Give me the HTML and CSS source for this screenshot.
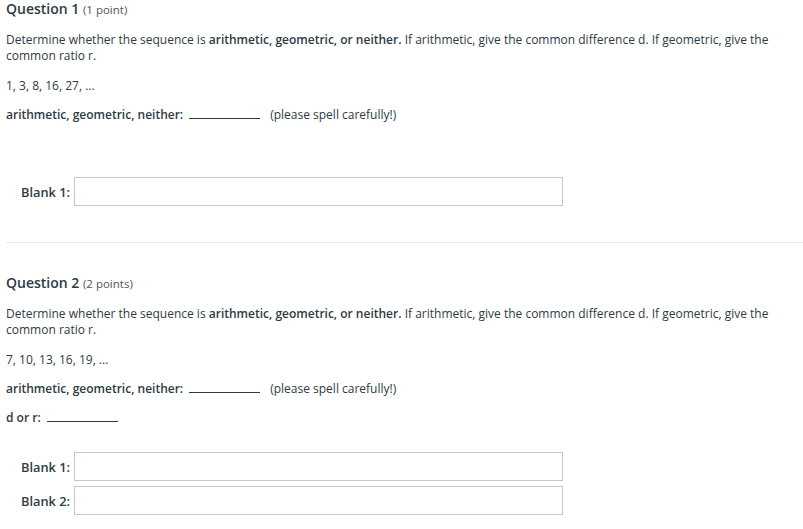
FILE: index.html
```html
<!DOCTYPE html>
<html>
<head>
<meta charset="utf-8">
<link rel="stylesheet" href="styles.css">
</head>
<body>
<div class="question q1">
  <h2 class="title">Question 1 <span class="points">(1 point)</span></h2>
  <p class="text">Determine whether the sequence is <b>arithmetic, geometric, or neither.</b> If arithmetic, give the common difference d. If geometric, give the common ratio r.</p>
  <p class="seq">1, 3, 8, 16, 27, ...</p>
  <p class="ask"><b>arithmetic, geometric, neither:</b><span class="blank"></span><span class="note">(please spell carefully!)</span></p>
  <div class="answers first">
    <div class="row"><label class="lbl">Blank 1:</label><div class="box"></div></div>
  </div>
</div>
<div class="sep"></div>
<div class="question q2">
  <h2 class="title">Question 2 <span class="points">(2 points)</span></h2>
  <p class="text">Determine whether the sequence is <b>arithmetic, geometric, or neither.</b> If arithmetic, give the common difference d. If geometric, give the common ratio r.</p>
  <p class="seq">7, 10, 13, 16, 19, ...</p>
  <p class="ask"><b>arithmetic, geometric, neither:</b><span class="blank"></span><span class="note">(please spell carefully!)</span></p>
  <p class="ask dr"><b>d or r:</b><span class="blank"></span></p>
  <div class="answers second">
    <div class="row"><label class="lbl">Blank 1:</label><div class="box"></div></div>
    <div class="row"><label class="lbl">Blank 2:</label><div class="box"></div></div>
  </div>
</div>
</body>
</html>
```
FILE: styles.css
```css
html, body {
  margin: 0;
  padding: 0;
  background: #ffffff;
}
body {
  font-family: "Open Sans", "Liberation Sans", sans-serif;
  color: #2d3b45;
  width: 803px;
}
.question {
  padding-left: 6px;
}
.title {
  margin: 0;
  font-size: 14px;
  line-height: 18px;
  font-weight: 600;
  color: #2d3b45;
}
.points {
  font-size: 11.5px;
  font-weight: 400;
  color: #555555;
}
.text {
  margin: 12.5px 0 0 0;
  font-size: 12px;
  line-height: 16.5px;
  width: 785px;
}
.text b, .ask b {
  font-weight: 600;
}
.seq {
  margin: 13.5px 0 0 0;
  font-size: 12px;
  line-height: 16px;
}
.ask {
  margin: 12.5px 0 0 0;
  font-size: 12px;
  line-height: 16px;
}
.dr {
  margin-top: 13px;
}
.blank {
  display: inline-block;
  width: 71px;
  height: 11px;
  border-bottom: 1px solid #2d3b45;
  margin-left: 6px;
  vertical-align: baseline;
}
.note {
  margin-left: 10px;
}
.answers {
  display: flex;
  flex-direction: column;
  gap: 5px;
}
.first {
  margin-top: 54.5px;
}
.second {
  margin-top: 26.5px;
}
.row {
  display: flex;
  align-items: center;
}
.lbl {
  width: 64px;
  text-align: right;
  padding-right: 4px;
  font-size: 12.8px;
  font-weight: 600;
}
.box {
  width: 487px;
  height: 27px;
  border: 1px solid #c7c7c7;
  background: #fff;
}
.sep {
  margin: 36px 0 0 6px;
  height: 1px;
  background: #e6e6e6;
}
.q2 {
  padding-top: 31px;
}
```
